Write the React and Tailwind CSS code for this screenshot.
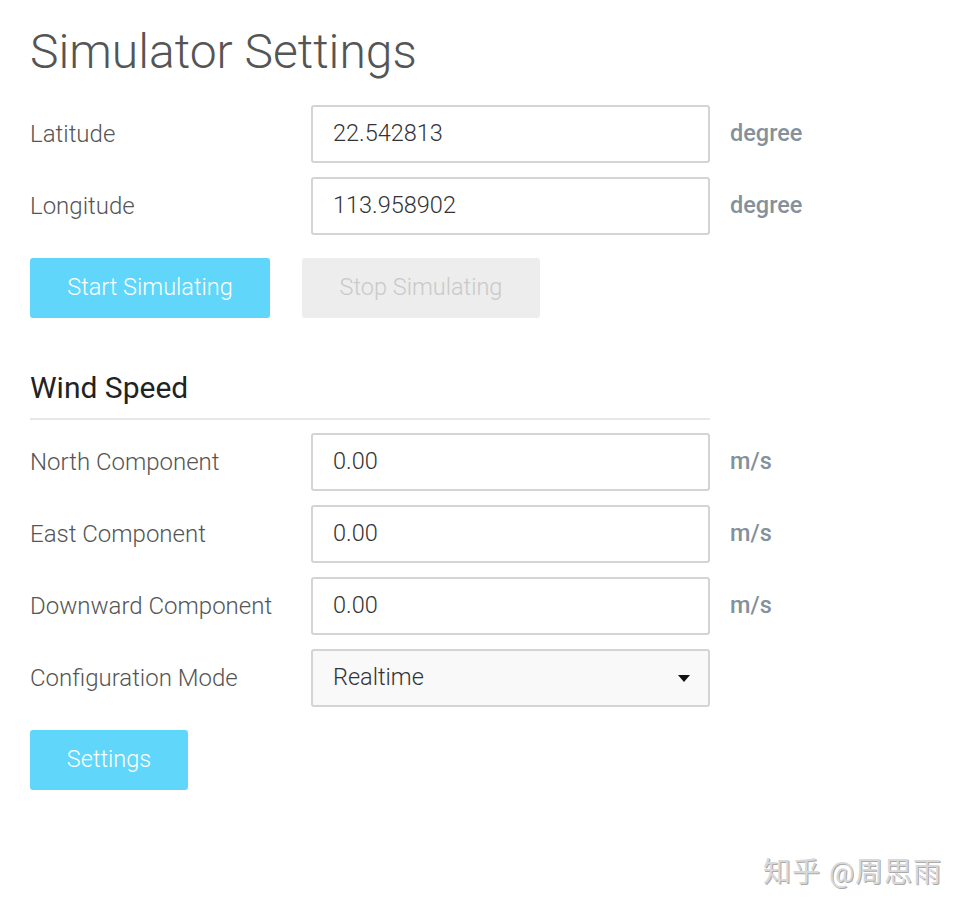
const font = { fontFamily: 'Roboto, "Noto Sans CJK SC", sans-serif' };

function Field({ label, value, unit }) {
    return (
        <div className="flex items-center h-[58px]">
            <label className="w-[281px] text-[24px] font-light text-[#555]">{label}</label>
            <div className="w-[399px] h-[58px] border-2 border-[#d4d4d4] rounded-[3px] bg-white flex items-center px-[20px] text-[23.5px] font-light text-[#333]">
                {value}
            </div>
            {unit && <span className="ml-[20px] text-[23.5px] font-medium text-[#85919a]">{unit}</span>}
        </div>
    );
}

export default function App() {
    return (
        <div className="relative w-[968px] h-[910px] bg-white" style={font}>
            <div className="pl-[30px] pt-[23px]">
                <h1 className="text-[48px] font-light text-[#555] leading-[58px]">Simulator Settings</h1>

                <div className="mt-[24px] flex flex-col gap-[14px]">
                    <Field label="Latitude" value="22.542813" unit="degree" />
                    <Field label="Longitude" value="113.958902" unit="degree" />
                </div>

                <div className="mt-[23px] flex gap-[32px]">
                    <button className="w-[240px] h-[60px] rounded-[3px] bg-[#5fd6fa] text-white text-[23.5px] font-light">
                        Start Simulating
                    </button>
                    <button className="w-[238px] h-[60px] rounded-[3px] bg-[#ededed] text-[#c9c9c9] text-[23.5px] font-light" disabled>
                        Stop Simulating
                    </button>
                </div>

                <h2 className="mt-[52px] text-[30px] text-[#222] leading-[36px]">Wind Speed</h2>
                <div className="mt-[12px] w-[680px] border-t-2 border-[#e8e8e8]"></div>

                <div className="mt-[13px] flex flex-col gap-[14px]">
                    <Field label="North Component" value="0.00" unit="m/s" />
                    <Field label="East Component" value="0.00" unit="m/s" />
                    <Field label="Downward Component" value="0.00" unit="m/s" />
                    <div className="flex items-center h-[58px]">
                        <label className="w-[281px] text-[24px] font-light text-[#555]">Configuration Mode</label>
                        <div className="w-[399px] h-[58px] border-2 border-[#d4d4d4] rounded-[3px] bg-[#f9f9f9] flex items-center justify-between pl-[20px] pr-[18px] text-[23.5px] font-light text-[#333]">
                            <span>Realtime</span>
                            <svg width="12" height="7" viewBox="0 0 12 7">
                                <path d="M0 0h12L6 7z" fill="#111" />
                            </svg>
                        </div>
                    </div>
                </div>

                <button className="mt-[23px] w-[158px] h-[60px] rounded-[3px] bg-[#5fd6fa] text-white text-[23.5px] font-light">
                    Settings
                </button>
            </div>

            <div className="absolute left-[763px] top-[852px] text-[28px] text-[#d8d8d8] tracking-[1px]" style={{ textShadow: '1px 1px 0 #aaa' }}>
                知乎 @周思雨
            </div>
        </div>
    );
}
